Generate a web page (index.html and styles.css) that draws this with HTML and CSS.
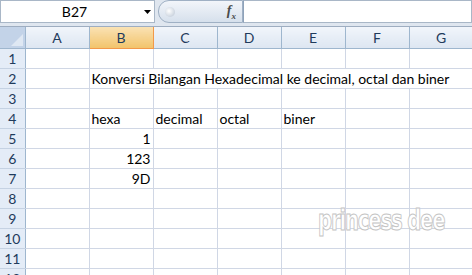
FILE: index.html
```html
<!DOCTYPE html>
<html lang="id">
<head>
    <meta charset="UTF-8">
    <title>Konversi Bilangan</title>
    <link rel="stylesheet" href="styles.css">
</head>
<body>
    <div class="formula-bar">
        <div class="name-box">
            <span class="cell-ref">B27</span>
            <svg class="drop" width="7" height="4" viewBox="0 0 7 4"><path d="M0 0H7L3.5 4Z" fill="#000"/></svg>
        </div>
        <div class="fx-box">
            <span class="knob"></span>
            <span class="fx">f<sub>x</sub></span>
        </div>
        <div class="formula-input"></div>
    </div>
    <div class="bar-gap"></div>

    <div class="sheet">
        <table class="grid">
            <colgroup>
                <col class="col-head">
                <col class="col"><col class="col"><col class="col"><col class="col"><col class="col"><col class="col"><col class="col">
            </colgroup>
            <thead>
                <tr>
                    <th class="corner"><svg width="12" height="12" viewBox="0 0 12 12"><path d="M12 0V12H0Z" fill="#dfe8f3"/></svg></th>
                    <th>A</th><th class="selected">B</th><th>C</th><th>D</th><th>E</th><th>F</th><th>G</th>
                </tr>
            </thead>
            <tbody>
                <tr><th>1</th><td></td><td></td><td></td><td></td><td></td><td></td><td></td></tr>
                <tr><th>2</th><td></td><td class="overflow spill">Konversi Bilangan Hexadecimal ke decimal, octal dan biner</td><td class="spill"></td><td class="spill"></td><td class="spill"></td><td class="spill"></td><td></td></tr>
                <tr><th>3</th><td></td><td></td><td></td><td></td><td></td><td></td><td></td></tr>
                <tr><th>4</th><td></td><td>hexa</td><td>decimal</td><td>octal</td><td>biner</td><td></td><td></td></tr>
                <tr><th>5</th><td></td><td class="num">1</td><td></td><td></td><td></td><td></td><td></td></tr>
                <tr><th>6</th><td></td><td class="num">123</td><td></td><td></td><td></td><td></td><td></td></tr>
                <tr><th>7</th><td></td><td class="num">9D</td><td></td><td></td><td></td><td></td><td></td></tr>
                <tr><th>8</th><td></td><td></td><td></td><td></td><td></td><td></td><td></td></tr>
                <tr><th>9</th><td></td><td></td><td></td><td></td><td></td><td></td><td></td></tr>
                <tr><th>10</th><td></td><td></td><td></td><td></td><td></td><td></td><td></td></tr>
                <tr><th>11</th><td></td><td></td><td></td><td></td><td></td><td></td><td></td></tr>
                <tr><th>12</th><td></td><td></td><td></td><td></td><td></td><td></td><td></td></tr>
            </tbody>
        </table>
        <div class="watermark">princess dee</div>
    </div>
</body>
</html>
```

FILE: styles.css
```css
body {
    margin: 0;
    width: 472px;
    height: 275px;
    overflow: hidden;
    background: #fff;
    font-family: Lato, "Liberation Sans", sans-serif;
    font-size: 14px;
    color: #000;
}
.formula-bar {
    display: flex;
    height: 23px;
    background: #dfe6ef;
}
.name-box {
    width: 155px;
    box-sizing: border-box;
    display: flex;
    align-items: center;
    background: #fff;
    border: 1px solid #a9b7c7;
}
.cell-ref {
    flex: 1;
    text-align: center;
    padding-left: 4px;
}
.drop {
    margin-right: 3px;
}
.fx-box {
    width: 85px;
    margin-left: 3px;
    box-sizing: border-box;
    display: flex;
    align-items: center;
    justify-content: space-between;
    padding: 0 6px 0 6px;
    border: 1px solid #9fb0c4;
    border-radius: 11px 0 0 11px;
    background: linear-gradient(#f2f5fa, #d6e0ec);
}
.knob {
    width: 10px;
    height: 10px;
    border-radius: 50%;
    background: radial-gradient(circle at 40% 40%, #fff, #b7c3d2);
}
.fx {
    font-family: "Liberation Serif", serif;
    font-style: italic;
    font-weight: bold;
    font-size: 14px;
    color: #4a4a4a;
}
.fx sub {
    font-size: 9px;
}
.formula-input {
    flex: 1;
    background: #fff;
    border: 1px solid #a9b7c7;
    border-left-color: #8ea2ba;
}
.bar-gap {
    height: 3px;
    background: #dfe6ef;
    border-bottom: 1px solid #9eadc0;
}
.sheet {
    position: relative;
    height: 248px;
    overflow: hidden;
}
.grid {
    width: 473px;
    border-collapse: collapse;
    table-layout: fixed;
}
.col-head { width: 25px; }
.col { width: 64px; }
.grid th,
.grid td {
    height: 19px;
    padding: 0 2px;
    white-space: nowrap;
    overflow: hidden;
}
.grid td {
    border: 1px solid #d0d7e5;
    border-top: none;
    border-left: none;
}
.grid td.spill {
    border-right-color: #fff;
}
.grid th {
    font-weight: normal;
    color: #1f3b5c;
    background: #e4ecf7;
    border: 1px solid #9eb6ce;
    border-top: none;
    border-left: none;
}
.grid thead th {
    background: linear-gradient(#f1f5fb, #dde6f1);
    text-align: center;
}
.grid tbody th {
    text-align: center;
    border-right-color: #9eb6ce;
    border-bottom-color: #c5d2e3;
}
.grid thead th.selected {
    background: linear-gradient(#fae2b4, #f2c46c);
    border-color: #f2994a;
    border-top: none;
}
.grid th.corner {
    background: #c3d3e8;
    text-align: right;
    vertical-align: bottom;
    padding: 0 2px 2px 0;
}
.corner svg {
    display: block;
    margin-left: auto;
}
.grid td.overflow {
    overflow: visible;
    position: relative;
    z-index: 1;
}
.num {
    text-align: right;
}
.watermark {
    position: absolute;
    left: 318px;
    top: 177px;
    white-space: nowrap;
    font-family: "DejaVu Sans Condensed", "DejaVu Sans", sans-serif;
    font-weight: bold;
    font-size: 28px;
    letter-spacing: -1.5px;
    transform: scaleX(0.78);
    transform-origin: left top;
    color: #fff;
    -webkit-text-stroke: 1px #c4c4c4;
}
```
